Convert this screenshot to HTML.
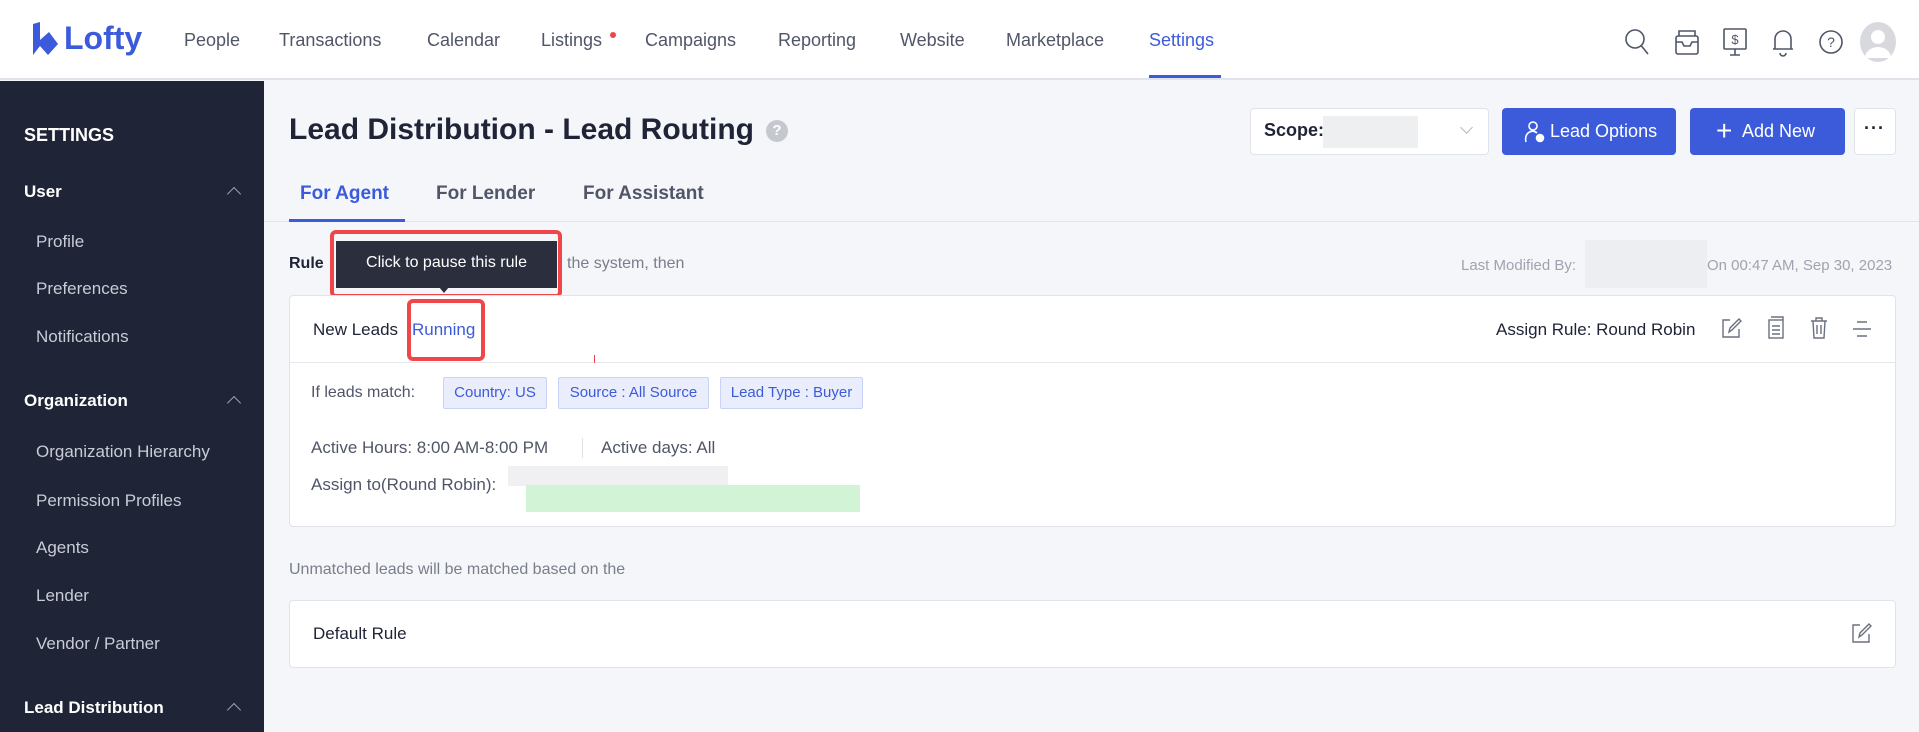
<!DOCTYPE html>
<html><head><meta charset="utf-8">
<style>
*{margin:0;padding:0;box-sizing:border-box}
body{width:1919px;height:732px;overflow:hidden;background:#f5f6fa;font-family:"Liberation Sans",sans-serif;color:#202437;position:relative}
.a{position:absolute;white-space:nowrap}
.top{position:absolute;left:0;top:0;width:1919px;height:80px;background:#fff;border-bottom:2px solid #e1e3ea}
.nav{font-size:18px;color:#505668;top:30px}
.side{position:absolute;left:0;top:81px;width:264px;height:651px;background:#1f2436}
.side .h{color:#fff;font-weight:bold;font-size:17px}
.side .i{color:#c9ccd6;font-size:17px;left:36px}
.chev{position:absolute;left:229px;width:10px;height:10px;border-left:1.5px solid #9ba0ae;border-top:1.5px solid #9ba0ae;transform:rotate(45deg)}
.card{position:absolute;background:#fff;border:1px solid #e1e3ea;border-radius:4px}
.tag{position:absolute;top:377px;height:32px;background:#e9edfc;border:1px solid #c9d3f5;border-radius:2px;color:#3d5bd9;font-size:15px;line-height:30px;text-align:center}
.btn{position:absolute;top:108px;height:47px;background:#3b5bdb;border-radius:4px;color:#fff;font-size:18px;line-height:47px}
.ic{position:absolute}
</style></head><body>
<div class="top"></div>
<svg class="ic" style="left:31px;top:22px" width="28" height="34" viewBox="0 0 28 34"><path d="M2 2 L9 0 L9 18 L18 10 L27 22 L17 33 L9 24 L2 33 Z" fill="#3b5bdb"/></svg>
<div class="a" style="left:64px;top:20px;font-size:32px;font-weight:bold;color:#3b5bdb">Lofty</div>
<div class="a nav" style="left:184px">People</div>
<div class="a nav" style="left:279px">Transactions</div>
<div class="a nav" style="left:427px">Calendar</div>
<div class="a nav" style="left:541px">Listings</div>
<div class="a" style="left:610px;top:32px;width:6px;height:6px;border-radius:3px;background:#f0464a"></div>
<div class="a nav" style="left:645px">Campaigns</div>
<div class="a nav" style="left:778px">Reporting</div>
<div class="a nav" style="left:900px">Website</div>
<div class="a nav" style="left:1006px">Marketplace</div>
<div class="a nav" style="left:1149px;color:#3b5bdb">Settings</div>
<div class="a" style="left:1149px;top:75px;width:72px;height:3px;background:#3b5bdb"></div>
<svg class="ic" style="left:1624px;top:28px" width="26" height="28" viewBox="0 0 26 28" fill="none" stroke="#505668" stroke-width="1.6"><circle cx="11" cy="11" r="9"/><path d="M17.5 18 L24 26"/></svg>
<svg class="ic" style="left:1674px;top:28px" width="26" height="28" viewBox="0 0 26 28" fill="none" stroke="#505668" stroke-width="1.6"><rect x="2" y="8" width="22" height="18" rx="2"/><path d="M5 8 V3 H21 V8 M2 14 H8 L10 18 H16 L18 14 H24"/></svg>
<svg class="ic" style="left:1722px;top:27px" width="26" height="30" viewBox="0 0 26 30" fill="none" stroke="#505668" stroke-width="1.6"><rect x="2" y="2" width="22" height="20" rx="1"/><path d="M13 22 V28 M8 28 H18"/><text x="13" y="17" font-size="13" text-anchor="middle" fill="#505668" stroke="none" font-family="Liberation Sans">$</text></svg>
<svg class="ic" style="left:1771px;top:27px" width="24" height="30" viewBox="0 0 24 30" fill="none" stroke="#505668" stroke-width="1.6"><path d="M4 22 V12 a8 8 0 0 1 16 0 V22 H2 H22 M9 26 a3 3 0 0 0 6 0"/></svg>
<svg class="ic" style="left:1818px;top:29px" width="26" height="26" viewBox="0 0 26 26" fill="none" stroke="#505668" stroke-width="1.6"><circle cx="13" cy="13" r="11"/><text x="13" y="18" font-size="14" text-anchor="middle" fill="#505668" stroke="none" font-family="Liberation Sans">?</text></svg>
<svg class="ic" style="left:1860px;top:22px" width="36" height="40" viewBox="0 0 36 40"><ellipse cx="18" cy="20" rx="18" ry="20" fill="#d8d9de"/><circle cx="18" cy="15" r="7" fill="#fff"/><path d="M5 36 a13 11 0 0 1 26 0 Z" fill="#fff"/></svg>

<div class="side">
<div class="a h" style="left:24px;top:44px;font-size:18px">SETTINGS</div>
<div class="a h" style="left:24px;top:101px">User</div><div class="chev" style="top:108px"></div>
<div class="a i" style="top:151px">Profile</div>
<div class="a i" style="top:198px">Preferences</div>
<div class="a i" style="top:246px">Notifications</div>
<div class="a h" style="left:24px;top:310px">Organization</div><div class="chev" style="top:317px"></div>
<div class="a i" style="top:361px">Organization Hierarchy</div>
<div class="a i" style="top:410px">Permission Profiles</div>
<div class="a i" style="top:457px">Agents</div>
<div class="a i" style="top:505px">Lender</div>
<div class="a i" style="top:553px">Vendor / Partner</div>
<div class="a h" style="left:24px;top:617px">Lead Distribution</div><div class="chev" style="top:624px"></div>
</div>

<div class="a" style="left:289px;top:113px;font-size:30px;font-weight:bold;color:#202437">Lead Distribution - Lead Routing</div>
<div class="a" style="left:766px;top:120px;width:22px;height:22px;border-radius:11px;background:#c6c8d0;color:#fff;font-size:15px;text-align:center;line-height:22px;font-weight:bold">?</div>

<div class="card" style="left:1250px;top:108px;width:239px;height:47px;border-radius:4px"></div>
<div class="a" style="left:1264px;top:120px;font-size:18px;font-weight:bold">Scope:</div>
<div class="a" style="left:1323px;top:116px;width:95px;height:32px;background:#eeeff1"></div>
<div class="a" style="left:1462px;top:123px;width:9px;height:9px;border-right:1.3px solid #b4b7c0;border-bottom:1.3px solid #b4b7c0;transform:rotate(45deg)"></div>
<div class="btn" style="left:1502px;width:174px"><svg style="position:absolute;left:22px;top:12px" width="22" height="24" viewBox="0 0 22 24" fill="none" stroke="#fff" stroke-width="1.6"><circle cx="9" cy="6" r="4"/><path d="M2 22 a7 8 0 0 1 11 -9"/><circle cx="16" cy="18" r="3.5" fill="#fff"/></svg><span style="position:absolute;left:48px">Lead Options</span></div>
<div class="btn" style="left:1690px;width:155px"><span style="position:absolute;left:26px;font-size:28px;top:-1px">+</span><span style="position:absolute;left:52px">Add New</span></div>
<div class="card" style="left:1854px;top:108px;width:42px;height:47px"></div>
<div class="a" style="left:1864px;top:118px;font-size:18px;font-weight:bold;letter-spacing:1px">···</div>

<div class="a" style="left:300px;top:183px;font-size:19px;font-weight:bold;color:#3b5bdb">For Agent</div>
<div class="a" style="left:436px;top:183px;font-size:19px;font-weight:bold;color:#505668">For Lender</div>
<div class="a" style="left:583px;top:183px;font-size:19px;font-weight:bold;color:#505668">For Assistant</div>
<div class="a" style="left:264px;top:221px;width:1655px;height:1px;background:#e1e3ea"></div>
<div class="a" style="left:289px;top:219px;width:116px;height:3px;background:#3b5bdb"></div>

<div class="a" style="left:289px;top:255px;font-size:16px;font-weight:bold">Rule</div>
<div class="a" style="left:567px;top:255px;font-size:16px;color:#797e8b">the system, then</div>
<div class="a" style="left:1461px;top:257px;font-size:15px;color:#a0a3af">Last Modified By:</div>
<div class="a" style="left:1585px;top:240px;width:122px;height:48px;background:#eceef2"></div>
<div class="a" style="left:1707px;top:257px;font-size:15px;color:#a0a3af">On 00:47 AM, Sep 30, 2023</div>

<div class="a" style="left:330px;top:230px;width:232px;height:68px;border:4px solid #f0464a;border-radius:6px"></div>
<div class="a" style="left:336px;top:241px;width:221px;height:47px;background:#2b2e3d;color:#fff;font-size:16px;text-align:center;line-height:44px">Click to pause this rule</div>
<div class="a" style="left:439px;top:287px;width:0;height:0;border-left:5px solid transparent;border-right:5px solid transparent;border-top:6px solid #2b2e3d"></div>

<div class="card" style="left:289px;top:295px;width:1607px;height:232px"></div>
<div class="a" style="left:290px;top:362px;width:1605px;height:1px;background:#e6e8ed"></div>
<div class="a" style="left:313px;top:320px;font-size:17px">New Leads</div>
<div class="a" style="left:412px;top:320px;font-size:17px;color:#3b5bdb">Running</div>
<div class="a" style="left:407px;top:299px;width:78px;height:62px;border:4px solid #f0464a;border-radius:6px"></div>
<div class="a" style="left:594px;top:355px;width:1px;height:8px;background:#f0464a"></div>
<div class="a" style="left:1496px;top:320px;font-size:17px">Assign Rule: Round Robin</div>
<svg class="ic" style="left:1721px;top:317px" width="22" height="22" viewBox="0 0 22 22" fill="none" stroke="#6b7080" stroke-width="1.4"><path d="M9 3 H2 V20 H18 V12"/><path d="M8 15 L9 11 L18 2 L20 4 L11 13 Z"/></svg>
<svg class="ic" style="left:1766px;top:316px" width="20" height="24" viewBox="0 0 20 24" fill="none" stroke="#6b7080" stroke-width="1.4"><rect x="3" y="4" width="14" height="18"/><path d="M5 1 H17 V4 M6 10 H14 M6 14 H14 M6 18 H14"/></svg>
<svg class="ic" style="left:1809px;top:316px" width="20" height="24" viewBox="0 0 20 24" fill="none" stroke="#6b7080" stroke-width="1.4"><path d="M2 5 H18 M7 5 V2 H13 V5 M4 5 L5 22 H15 L16 5 M8 9 V18 M12 9 V18"/></svg>
<svg class="ic" style="left:1852px;top:320px" width="20" height="18" viewBox="0 0 20 18" fill="none" stroke="#6b7080" stroke-width="1.4"><path d="M5 2 H15 M1 9 H19 M5 16 H15"/></svg>

<div class="a" style="left:311px;top:384px;font-size:16px;color:#505668">If leads match:</div>
<div class="tag" style="left:443px;width:104px">Country: US</div>
<div class="tag" style="left:558px;width:151px">Source : All Source</div>
<div class="tag" style="left:720px;width:143px">Lead Type : Buyer</div>
<div class="a" style="left:311px;top:438px;font-size:17px;color:#505668">Active Hours: 8:00 AM-8:00 PM</div>
<div class="a" style="left:582px;top:438px;width:1px;height:20px;background:#e1e3ea"></div>
<div class="a" style="left:601px;top:438px;font-size:17px;color:#505668">Active days: All</div>
<div class="a" style="left:311px;top:475px;font-size:17px;color:#505668">Assign to(Round Robin):</div>
<div class="a" style="left:508px;top:466px;width:220px;height:20px;background:#f0f0f2"></div>
<div class="a" style="left:526px;top:485px;width:334px;height:27px;background:#d2f3d6"></div>

<div class="a" style="left:289px;top:561px;font-size:16px;color:#797e8b">Unmatched leads will be matched based on the</div>
<div class="card" style="left:289px;top:600px;width:1607px;height:68px"></div>
<div class="a" style="left:313px;top:624px;font-size:17px">Default Rule</div>
<svg class="ic" style="left:1851px;top:622px" width="22" height="22" viewBox="0 0 22 22" fill="none" stroke="#6b7080" stroke-width="1.4"><path d="M9 3 H2 V20 H18 V12"/><path d="M8 15 L9 11 L18 2 L20 4 L11 13 Z"/></svg>
</body></html>
